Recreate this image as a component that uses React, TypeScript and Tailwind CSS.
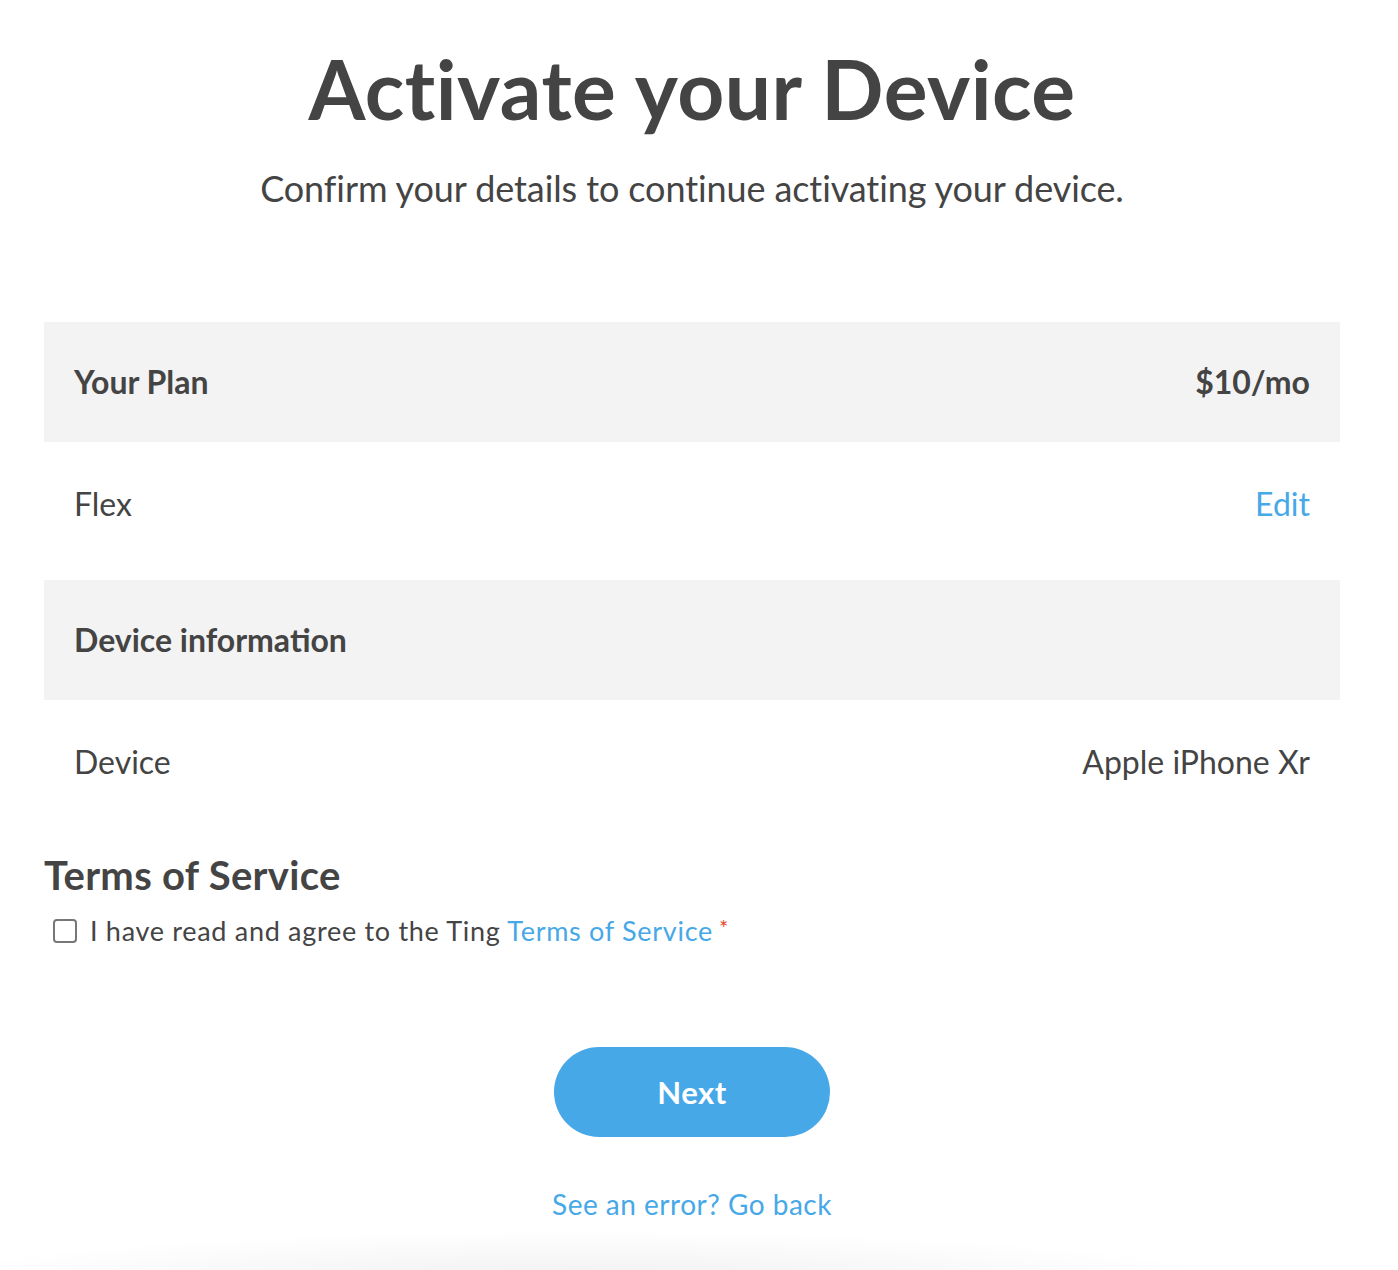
import React, { useState } from 'react';

const font = { fontFamily: '"Lato", "Noto Sans", "Liberation Sans", sans-serif' };

export default function App() {
  const [agreed, setAgreed] = useState(false);

  return (
    <div className="relative min-h-[1270px] bg-white text-[#444] overflow-hidden" style={font}>
      <div className="pl-[44px] pr-[58px] pt-[40px]">
        {/* heading */}
        <h1 className="text-center text-[82px] font-bold leading-[96px] tracking-[0.5px]">Activate your Device</h1>
        <p className="mt-[30px] text-center text-[36px] leading-[44px] tracking-[-0.1px]">
          Confirm your details to continue activating your device.
        </p>

        {/* summary */}
        <div className="mt-[112px]">
          <div className="flex h-[120px] items-center justify-between bg-[#f3f3f3] px-[30px] text-[32px] font-bold">
            <span>Your Plan</span>
            <span>$10/mo</span>
          </div>
          <div className="flex h-[138px] items-center justify-between px-[30px] pb-[14px] text-[32px]">
            <span>Flex</span>
            <a href="#" className="text-[#47a8e8]">Edit</a>
          </div>
          <div className="flex h-[120px] items-center bg-[#f3f3f3] px-[30px] text-[32px] font-bold">
            <span>Device information</span>
          </div>
          <div className="flex h-[138px] items-center justify-between px-[30px] pb-[14px] text-[32px]">
            <span>Device</span>
            <span>Apple iPhone Xr</span>
          </div>
        </div>

        {/* terms */}
        <h2 className="mt-[13px] text-[40px] font-bold leading-[48px] tracking-[0.3px]">Terms of Service</h2>
        <label className="mt-[15px] flex items-center gap-[13px] pl-[9px] text-[27px] leading-[34px] tracking-[0.7px]">
          <input
            type="checkbox"
            checked={agreed}
            onChange={(e) => setAgreed(e.target.checked)}
            className="h-[24px] w-[24px] shrink-0 appearance-none rounded-[4px] border-2 border-[#777] bg-white checked:bg-[#47a8e8]"
          />
          <span>
            I have read and agree to the Ting <a href="#" className="text-[#47a8e8]">Terms of Service</a>
            <span className="ml-[6px] align-top text-[22px] leading-[28px] text-[#e4472f]">*</span>
          </span>
        </label>

        {/* actions */}
        <div className="mt-[99px] flex flex-col items-center">
          <button className="h-[90px] w-[276px] rounded-full bg-[#47a8e8] text-[31px] font-bold tracking-[0.5px] text-white">
            Next
          </button>
          <a href="#" className="mt-[50px] text-[28px] leading-[34px] tracking-[0.5px] text-[#47a8e8]">See an error? Go back</a>
        </div>
      </div>

      {/* faint footer shadow */}
      <div className="pointer-events-none absolute bottom-[-60px] left-[-80px] h-[100px] w-[1320px] rounded-[50%] bg-[radial-gradient(ellipse_at_center,rgba(0,0,0,0.06),rgba(0,0,0,0)_70%)]" />
    </div>
  );
}
